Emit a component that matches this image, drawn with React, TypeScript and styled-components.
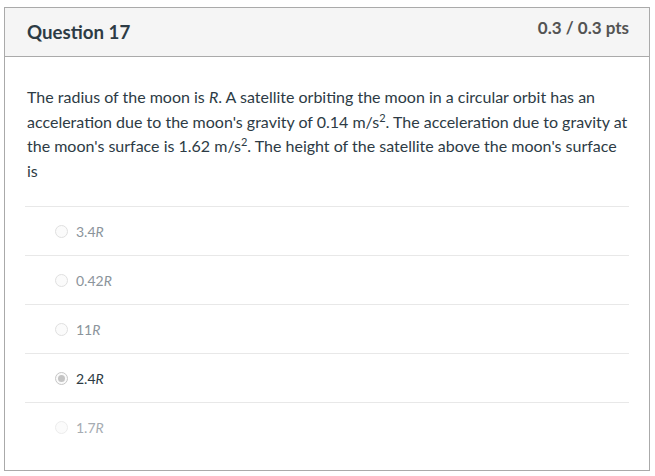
import React from "react";
import styled, { createGlobalStyle } from "styled-components";

const GlobalStyle = createGlobalStyle`
  html, body {
    margin: 0;
    padding: 0;
    background: #ffffff;
  }
  body {
    font-family: Lato, "Open Sans", sans-serif;
    color: #2d3b45;
  }
`;

const Page = styled.div`
  padding: 7px 5px 4px 4px;
`;

const Card = styled.div`
  width: 644px;
  border: 1px solid #aaaaaa;
  background: #ffffff;
`;

const Header = styled.div`
  height: 48px;
  display: flex;
  align-items: center;
  justify-content: space-between;
  padding: 0 20px 0 22px;
  background: #f5f5f5;
  border-bottom: 1px solid #aaaaaa;
`;

const Title = styled.div`
  font-size: 18.7px;
  font-weight: bold;
  color: #2d3b45;
  margin-top: 0;
`;

const Points = styled.div`
  font-size: 17px;
  font-weight: bold;
  color: #535353;
  margin-top: -9px;
`;

const Body = styled.div`
  padding: 28px 18px 19px 20px;
`;

const Prompt = styled.div`
  font-size: 16px;
  line-height: 24.5px;
  color: #2d3b45;
  padding: 0 0 0 2px;
  margin-bottom: 23px;

  sup {
    font-size: 11px;
    line-height: 0;
    vertical-align: 6px;
  }
`;

const Answers = styled.div`
  display: flex;
  flex-direction: column;
  margin-right: 2px;
`;

const Answer = styled.div`
  height: 48px;
  display: flex;
  align-items: center;
  gap: 8px;
  padding-left: 30px;
  border-top: 1px solid #e8e8e8;
`;

const Radio = styled.span<{ $checked?: boolean; $faded?: boolean }>`
  box-sizing: border-box;
  width: 13px;
  height: 13px;
  border-radius: 50%;
  border: 1px solid ${(p) => (p.$checked ? "#c7c7c7" : p.$faded ? "#ececec" : "#e0e0e0")};
  background: ${(p) => (p.$checked ? "#fafafa" : "#fbfbfb")};
  display: flex;
  align-items: center;
  justify-content: center;

  &::after {
    content: "";
    display: ${(p) => (p.$checked ? "block" : "none")};
    width: 7px;
    height: 7px;
    border-radius: 50%;
    background: #c4c4c4;
  }
`;

const Label = styled.span<{ $checked?: boolean; $faded?: boolean }>`
  font-size: 14px;
  color: ${(p) => (p.$checked ? "#2d3b45" : p.$faded ? "#a6acb2" : "#8b949b")};
`;

const answers = [
  { value: "3.4" },
  { value: "0.42" },
  { value: "11" },
  { value: "2.4", checked: true },
  { value: "1.7", faded: true },
];

export default function App() {
  return (
    <>
      <GlobalStyle />
      <Page>
        <Card>
          <Header>
            <Title>Question 17</Title>
            <Points>0.3 / 0.3 pts</Points>
          </Header>
          <Body>
            <Prompt>
              The radius of the moon is <i>R</i>. A satellite orbiting the moon in a
              circular orbit has an acceleration due to the moon's gravity of 0.14
              m/s<sup>2</sup>. The acceleration due to gravity at the moon's surface is
              1.62 m/s<sup>2</sup>. The height of the satellite above the moon's surface
              is
            </Prompt>
            <Answers>
              {answers.map((a) => (
                <Answer key={a.value}>
                  <Radio $checked={a.checked} $faded={a.faded} />
                  <Label $checked={a.checked} $faded={a.faded}>
                    {a.value}
                    <i>R</i>
                  </Label>
                </Answer>
              ))}
            </Answers>
          </Body>
        </Card>
      </Page>
    </>
  );
}
